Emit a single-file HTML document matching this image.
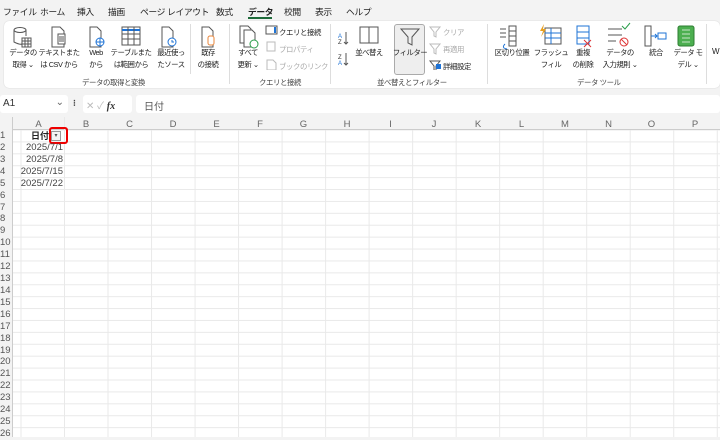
<!DOCTYPE html>
<html><head><meta charset="utf-8">
<style>
*{margin:0;padding:0;box-sizing:border-box}
body{width:720px;height:437px;overflow:hidden;background:#f3f3f3;font-family:"Liberation Sans","Noto Sans CJK JP",sans-serif;position:relative;color:#222}
.a{position:absolute;white-space:nowrap}
.tab{font-size:8.8px;top:5px;letter-spacing:-0.4px}
.rb{position:absolute;left:4px;top:21px;width:716px;height:67px;background:#fff;border-radius:5px;box-shadow:0 0 1px #bbb}
.lb{font-size:7.4px;line-height:12px;text-align:center;letter-spacing:-0.5px;width:60px;margin-left:-30px}
.gl{font-size:7.4px;color:#444;letter-spacing:-0.4px}
.sep{position:absolute;top:24px;width:1px;height:60px;background:#ddd}
.ic{position:absolute}
.small{font-size:7.4px;letter-spacing:-0.4px}
.gray{color:#aaa}
.hdr{font-size:9.5px;color:#666;text-align:center;top:119px}
.rn{font-size:9.5px;color:#555;left:0;width:12px;text-align:left}
.cell{font-size:9.5px;color:#444;text-align:right}
</style></head><body>
<div class="a tab" style="left:3px">ファイル</div>
<div class="a tab" style="left:40px">ホーム</div>
<div class="a tab" style="left:77px">挿入</div>
<div class="a tab" style="left:108px">描画</div>
<div class="a tab" style="left:140px">ページ レイアウト</div>
<div class="a tab" style="left:216px">数式</div>
<div class="a tab" style="left:248px;font-weight:bold">データ</div>
<div class="a" style="left:248px;top:17px;width:24px;height:2px;background:#1e6b3a"></div>
<div class="a tab" style="left:284px">校閲</div>
<div class="a tab" style="left:315px">表示</div>
<div class="a tab" style="left:346px">ヘルプ</div>

<div class="rb"></div>
<svg class="ic" style="left:0;top:22px" width="720" height="48" viewBox="0 0 720 48" fill="none" stroke="#555" stroke-width="1">
<ellipse cx="20" cy="8" rx="6" ry="2.5"/><path d="M14 8v12q6 3 8 2M26 8v6"/><rect x="22" y="16" width="9" height="9" fill="#fff"/><path d="M22 19h9M22 22h9M25 16v9M28 16v9"/>
<path d="M52 5h8l4 4v16h-12z"/><rect x="58" y="12" width="7" height="10" fill="#fff"/><path d="M59 15h5M59 17h5M59 19h5"/>
<path d="M90 5h7l4 4v16h-11z"/><circle cx="100" cy="20" r="4" fill="#fff" stroke="#1e73d6"/><path d="M96 20h8M100 16v8" stroke="#1e73d6"/>
<rect x="122" y="5" width="18" height="18"/><path d="M122 8h18" stroke="#1e73d6" stroke-width="2"/><path d="M122 12h18M122 17h18M128 5v18M134 5v18"/>
<path d="M162 5h7l4 4v16h-11z"/><circle cx="172" cy="20" r="4" fill="#fff" stroke="#1e73d6"/><path d="M172 18v2h2" stroke="#1e73d6"/>
<path d="M202 5h7l4 4v16h-11z"/><rect x="208" y="14" width="6" height="9" rx="2" fill="#fff" stroke="#e8853a"/>
<path d="M240 4h8l3 3v14h-11z"/><path d="M244 8h8l3 3v14h-11z" fill="#fff"/><circle cx="254" cy="22" r="4" stroke="#2a9d4a" fill="#fff"/>
<rect x="266" y="4" width="11" height="8"/><rect x="274" y="5" width="2" height="6" fill="#1e73d6" stroke="none"/>
<rect x="267" y="20" width="8" height="9" stroke="#bbb"/><path d="M267 38h6l3 3v7h-9z" stroke="#bbb"/>
<text x="338" y="16" font-size="6" fill="#1e73d6" stroke="none">A</text><text x="338" y="22" font-size="6" fill="#333" stroke="none">Z</text><path d="M346 10v12M344 20l2 2 2-2"/>
<text x="338" y="37" font-size="6" fill="#333" stroke="none">Z</text><text x="338" y="43" font-size="6" fill="#1e73d6" stroke="none">A</text><path d="M346 31v12M344 41l2 2 2-2"/>
<rect x="360" y="5" width="18" height="16"/><path d="M369 5v16"/>
<path d="M430 5h10l-4 5v5l-2-1v-4z" stroke="#bbb"/><path d="M430 22h10l-4 5v5l-2-1v-4z" stroke="#bbb"/>
<path d="M430 39h10l-4 5v5l-2-1v-4z"/><rect x="436" y="42" width="5" height="5" fill="#1e73d6" stroke="none"/>
<rect x="509" y="4" width="7" height="20"/><path d="M500 7h6M500 11h6M500 15h6M509 9h7M509 14h7M509 19h7"/><path d="M505 22q-4 4 2 5" stroke="#1e73d6"/>
<rect x="545" y="6" width="16" height="16"/><path d="M545 11h16M545 16h16M551 6v16" stroke="#1e73d6"/><path d="M544 2l-4 7h3l-2 6 5-8h-3z" fill="#e8a020" stroke="none"/>
<rect x="577" y="4" width="12" height="18" stroke="#1e73d6"/><path d="M577 10h12M577 16h12" stroke="#1e73d6"/><path d="M584 18l7 7M591 18l-7 7" stroke="#d33"/>
<path d="M608 7h14M608 13h14M608 19h8"/><path d="M622 4l3 3 5-6" stroke="#2a9d4a"/><circle cx="624" cy="20" r="4" stroke="#d33"/><path d="M621 17l6 6" stroke="#d33"/>
<rect x="645" y="4" width="6" height="20"/><path d="M651 14h6M655 12l2 2-2 2" stroke="#1e73d6"/><rect x="658" y="11" width="8" height="6" stroke="#1e73d6"/>
<rect x="678" y="4" width="16" height="20" rx="2" fill="#4caf50" stroke="#2e7d32"/><path d="M682 8h8M682 12h8M682 16h8M682 20h8" stroke="#c8e6c9"/>
</svg>
<div class="a" style="left:394px;top:24px;width:31px;height:51px;border:1px solid #aaa;border-radius:3px;background:#eee"></div>
<svg class="ic" style="left:400px;top:27px" width="20" height="20" fill="none" stroke="#555"><path d="M1 2h18l-7 8v8l-4-2v-6z"/></svg>

<div class="a lb" style="left:23px;top:47px">データの<br>取得 ⌄</div>
<div class="a lb" style="left:59px;top:47px">テキストまた<br>は CSV から</div>
<div class="a lb" style="left:96px;top:47px">Web<br>から</div>
<div class="a lb" style="left:131px;top:47px">テーブルまた<br>は範囲から</div>
<div class="a lb" style="left:171px;top:47px">最近使っ<br>たソース</div>
<div class="a lb" style="left:208px;top:47px">既存<br>の接続</div>
<div class="a gl" style="left:82px;top:77px">データの取得と変換</div>
<div class="sep" style="left:190px;height:50px"></div>
<div class="sep" style="left:229px"></div>
<div class="a lb" style="left:248px;top:47px">すべて<br>更新 ⌄</div>
<div class="a small" style="left:279px;top:27px">クエリと接続</div>
<div class="a small gray" style="left:279px;top:44px">プロパティ</div>
<div class="a small gray" style="left:279px;top:61px">ブックのリンク</div>
<div class="a gl" style="left:259px;top:77px">クエリと接続</div>
<div class="sep" style="left:330px"></div>
<div class="a lb" style="left:369px;top:47px">並べ替え</div>
<div class="a lb" style="left:410px;top:47px">フィルター</div>
<div class="a small gray" style="left:443px;top:27px">クリア</div>
<div class="a small gray" style="left:443px;top:44px">再適用</div>
<div class="a small" style="left:443px;top:61px">詳細設定</div>
<div class="a gl" style="left:377px;top:77px">並べ替えとフィルター</div>
<div class="sep" style="left:487px"></div>
<div class="a lb" style="left:512px;top:47px">区切り位置</div>
<div class="a lb" style="left:551px;top:47px">フラッシュ<br>フィル</div>
<div class="a lb" style="left:583px;top:47px">重複<br>の削除</div>
<div class="a lb" style="left:620px;top:47px">データの<br>入力規則 ⌄</div>
<div class="a lb" style="left:656px;top:47px">統合</div>
<div class="a lb" style="left:688px;top:47px">データ モ<br>デル ⌄</div>
<div class="a gl" style="left:577px;top:77px">データ ツール</div>
<div class="sep" style="left:706px"></div>
<div class="a" style="left:712px;top:47px;font-size:8px">W</div>

<div class="a" style="left:0;top:95px;width:68px;height:18px;background:#fff;border-radius:3px;font-size:10px;padding:3px 3px;color:#333">A1<span style="position:absolute;right:4px;top:2px;color:#666">⌄</span></div>
<div class="a" style="left:73px;top:98px;font-size:9px;color:#444;font-weight:bold">⁝</div>
<div class="a" style="left:83px;top:95px;width:49px;height:18px;background:#fff;border-radius:3px;font-size:10px;color:#bbb;padding:2px 3px">✕ ✓ <i style="color:#333;font-family:'Liberation Serif';font-weight:bold">fx</i></div>
<div class="a" style="left:136px;top:95px;width:584px;height:18px;background:#fff;border-radius:3px;font-size:10px;color:#555;padding:3px 8px">日付</div>

<div class="a" style="left:0;top:117px;width:720px;height:13px;background:#f3f3f3;border-bottom:1px solid #ccc"></div>
<div class="a" style="left:0;top:117px;width:13px;height:320px;background:#f3f3f3;border-right:1px solid #ccc"></div>
<div class="a" style="left:13px;top:130px;width:707px;height:307px;background-color:#fff;
background-image:linear-gradient(to right,#e9e9e9 1px,transparent 1px),linear-gradient(to bottom,#e9e9e9 1px,transparent 1px);
background-size:43.53px 11.92px;background-position:7.5px 0,0 11.4px"></div>
<div class="a" style="left:64px;top:117px;width:1px;height:320px;background:#e9e9e9"></div>
<div class="a hdr" style="left:13px;width:51px">A</div>
<div class="a hdr" style="left:64px;width:44px">B</div>
<div class="a hdr" style="left:108px;width:43px">C</div>
<div class="a hdr" style="left:151px;width:44px">D</div>
<div class="a hdr" style="left:195px;width:43px">E</div>
<div class="a hdr" style="left:238px;width:44px">F</div>
<div class="a hdr" style="left:282px;width:43px">G</div>
<div class="a hdr" style="left:325px;width:44px">H</div>
<div class="a hdr" style="left:369px;width:43px">I</div>
<div class="a hdr" style="left:412px;width:44px">J</div>
<div class="a hdr" style="left:456px;width:44px">K</div>
<div class="a hdr" style="left:500px;width:43px">L</div>
<div class="a hdr" style="left:543px;width:44px">M</div>
<div class="a hdr" style="left:587px;width:43px">N</div>
<div class="a hdr" style="left:630px;width:43px">O</div>
<div class="a hdr" style="left:673px;width:44px">P</div>

<div id="rows"></div>
<script>
var h='';for(var i=1;i<=26;i++){h+='<div class="a rn" style="top:'+(130+(i-1)*11.92)+'px;line-height:12px">'+i+'</div>';}
document.getElementById('rows').innerHTML=h;
</script>
<div class="a cell" style="left:14px;width:35px;top:130px;line-height:12px;font-weight:bold;color:#222;font-size:9px">日付</div>
<div class="a" style="left:51px;top:131px;width:10px;height:10px;border:1px solid #999;background:#f4f4f4;font-size:6px;text-align:center;line-height:8px;color:#555">▾</div>
<div class="a" style="left:49px;top:127px;width:19px;height:17px;border:2.5px solid #e00;border-radius:3px"></div>
<div class="a cell" style="left:14px;width:49px;top:142px;line-height:12px">2025/7/1</div>
<div class="a cell" style="left:14px;width:49px;top:154px;line-height:12px">2025/7/8</div>
<div class="a cell" style="left:14px;width:49px;top:166px;line-height:12px">2025/7/15</div>
<div class="a cell" style="left:14px;width:49px;top:178px;line-height:12px">2025/7/22</div>
</body></html>
